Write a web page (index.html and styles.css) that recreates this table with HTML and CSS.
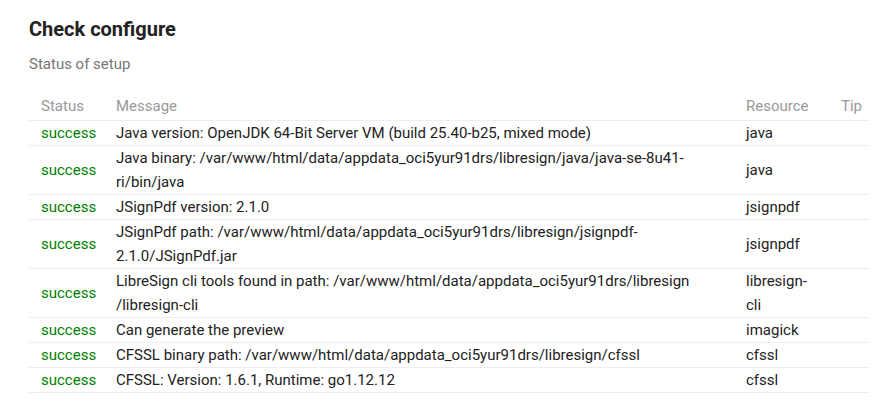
FILE: index.html
```html
<!DOCTYPE html>
<html>
<head>
<meta charset="utf-8">
<link rel="stylesheet" href="styles.css">
</head>
<body>
<div class="section">
  <h2 class="title">Check configure</h2>
  <p class="subtitle">Status of setup</p>
  <table class="grid">
    <colgroup>
      <col class="c-status">
      <col class="c-message">
      <col class="c-resource">
      <col class="c-tip">
    </colgroup>
    <thead>
      <tr><th>Status</th><th>Message</th><th>Resource</th><th>Tip</th></tr>
    </thead>
    <tbody>
      <tr><td class="ok">success</td><td>Java version: OpenJDK 64-Bit Server VM (build 25.40-b25, mixed mode)</td><td>java</td><td></td></tr>
      <tr><td class="ok">success</td><td>Java binary: /var/www/html/data/appdata_oci5yur91drs/libresign/java/java-se-8u41-ri/bin/java</td><td>java</td><td></td></tr>
      <tr><td class="ok">success</td><td>JSignPdf version: 2.1.0</td><td>jsignpdf</td><td></td></tr>
      <tr><td class="ok">success</td><td>JSignPdf path: /var/www/html/data/appdata_oci5yur91drs/libresign/jsignpdf-2.1.0/JSignPdf.jar</td><td>jsignpdf</td><td></td></tr>
      <tr><td class="ok">success</td><td>LibreSign cli tools found in path: /var/www/html/data/appdata_oci5yur91drs/libresign<wbr>/libresign-cli</td><td>libresign-cli</td><td></td></tr>
      <tr><td class="ok">success</td><td>Can generate the preview</td><td>imagick</td><td></td></tr>
      <tr><td class="ok">success</td><td>CFSSL binary path: /var/www/html/data/appdata_oci5yur91drs/libresign/cfssl</td><td>cfssl</td><td></td></tr>
      <tr><td class="ok">success</td><td>CFSSL: Version: 1.6.1, Runtime: go1.12.12</td><td>cfssl</td><td></td></tr>
    </tbody>
  </table>
</div>
</body>
</html>
```
FILE: styles.css
```css
html, body {
  margin: 0;
  padding: 0;
  background: #ffffff;
}
body {
  font-family: Roboto, "Noto Sans", sans-serif;
  font-size: 15px;
  color: #222222;
}
.section {
  padding: 14px 22px 20px 29px;
}
.title {
  margin: 0;
  font-size: 20px;
  font-weight: bold;
  line-height: 30px;
  color: #222222;
}
.subtitle {
  margin: 10px 0 0;
  line-height: 20px;
  color: #767676;
}
.grid {
  margin-top: 17px;
  width: 840px;
  border-collapse: collapse;
  table-layout: fixed;
}
.c-status { width: 75px; }
.c-message { width: 630px; }
.c-resource { width: 95px; }
.c-tip { width: 40px; }
.grid th {
  text-align: left;
  font-weight: normal;
  color: #999999;
  padding: 0 12px;
  height: 29px;
  vertical-align: middle;
  border-bottom: 1px solid #ededed;
}
.grid td {
  padding: 0 12px;
  line-height: 24px;
  vertical-align: middle;
  border-bottom: 1px solid #ededed;
}
.grid td.ok {
  color: #008000;
}
```
